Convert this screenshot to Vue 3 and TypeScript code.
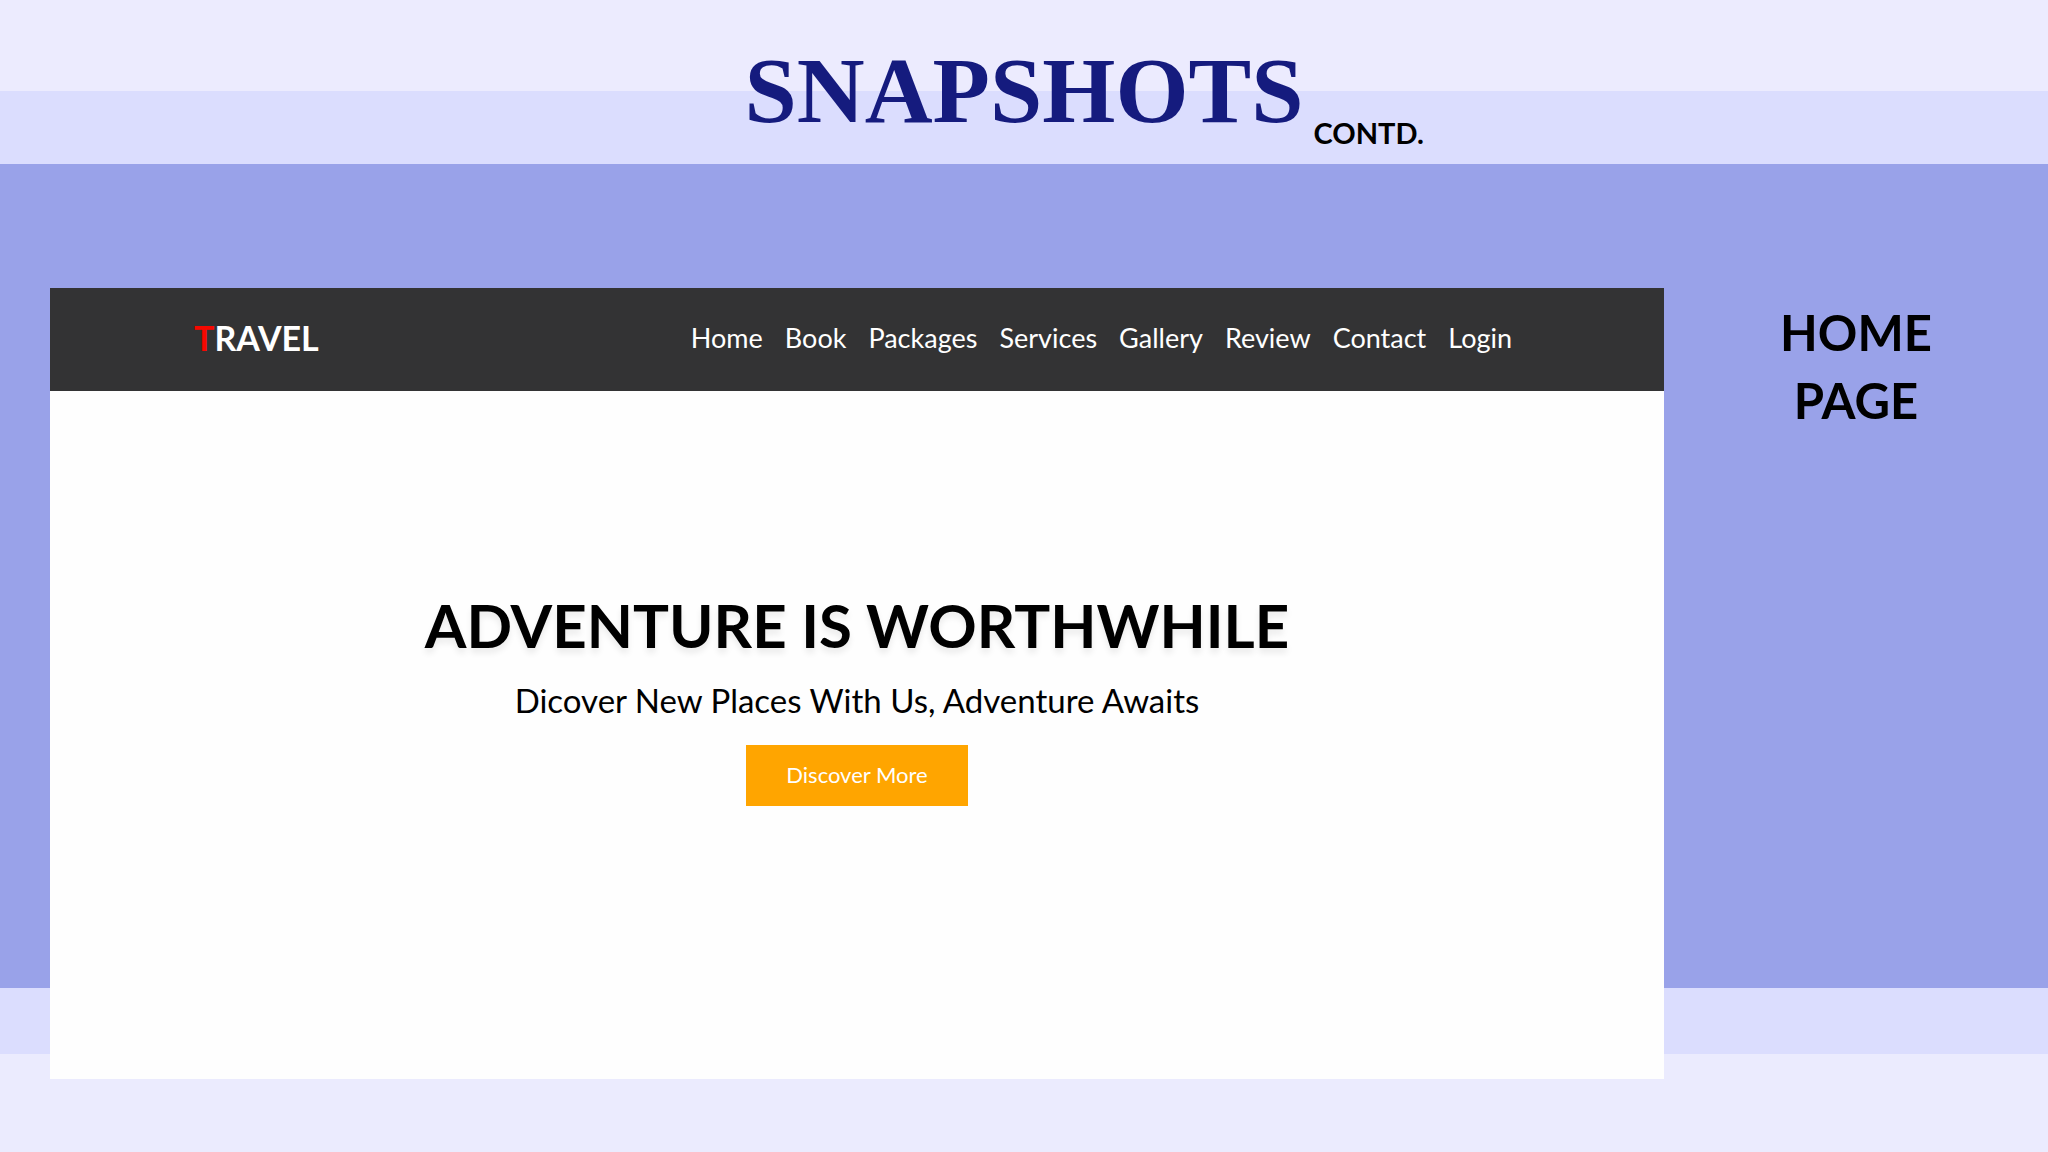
<script setup lang="ts">
const links: string[] = ['Home', 'Book', 'Packages', 'Services', 'Gallery', 'Review', 'Contact', 'Login']
</script>

<template>
  <div class="slide">
    <header class="slide-head">
      <h1 class="title">SNAPSHOTS</h1>
      <span class="contd">CONTD.</span>
    </header>

    <main class="stage">
      <section class="site">
        <div class="site-bar">
          <a class="brand" href="#"><span class="brand-initial">T</span>RAVEL</a>
          <nav class="site-nav">
            <a v-for="link in links" :key="link" href="#">{{ link }}</a>
          </nav>
        </div>
        <div class="hero">
          <h2 class="hero-title">ADVENTURE IS WORTHWHILE</h2>
          <p class="hero-text">Dicover New Places With Us, Adventure Awaits</p>
          <button class="hero-button" type="button">Discover More</button>
        </div>
      </section>
      <h2 class="caption">HOME<br />PAGE</h2>
    </main>
  </div>
</template>

<style>
body {
  margin: 0;
}
</style>

<style scoped>
.slide {
  display: flex;
  flex-direction: column;
  min-height: 100vh;
  font-family: Lato, 'Open Sans', sans-serif;
  color: #000;
  background: linear-gradient(
    to bottom,
    #ecebfe 91px,
    #dbddfe 91px,
    #dbddfe 164px,
    #99a2e9 164px,
    #99a2e9 calc(100% - 164px),
    #dbddfe calc(100% - 164px),
    #dbddfe calc(100% - 98px),
    #ebebfe calc(100% - 98px)
  );
}

.slide-head {
  display: grid;
  grid-template-columns: 1fr auto 1fr;
  column-gap: 10px;
  box-sizing: border-box;
  height: 164px;
  padding: 38px 0 13px;
}

.title {
  grid-column: 2;
  margin: 0;
  font: bold 94px/104px 'Liberation Serif', 'Times New Roman', serif;
  color: #151b7e;
}

.contd {
  align-self: end;
  font-size: 29px;
  font-weight: 700;
  line-height: 36px;
}

.stage {
  flex: 1;
  display: grid;
  grid-template-columns: 1fr 384px;
  padding: 124px 0 73px 50px;
}

.site {
  display: flex;
  flex-direction: column;
  background: #fefefe;
}

.site-bar {
  display: flex;
  align-items: center;
  justify-content: space-between;
  height: 99px;
  padding: 0 152px 4px 144px;
  background: #333334;
}

.site-bar a {
  color: #fff;
  text-decoration: none;
}

.brand {
  font-size: 34px;
  font-weight: 700;
  line-height: 40px;
}

.site-bar .brand-initial {
  color: #f60800;
}

.site-nav {
  display: flex;
  gap: 22px;
  font-size: 27px;
  line-height: 32px;
}

.hero {
  flex: 1;
  display: flex;
  flex-direction: column;
  align-items: center;
  justify-content: center;
  padding-bottom: 76px;
  text-align: center;
}

.hero-title {
  margin: 0;
  font-size: 60px;
  font-weight: 700;
  line-height: 72px;
  text-shadow: 0 5px 6px rgba(0, 0, 0, 0.08);
}

.hero-text {
  margin: 19px 0 25px;
  font-size: 33px;
  line-height: 40px;
}

.hero-button {
  height: 61px;
  padding: 0 40px;
  border: 0;
  font: 22px/28px Lato, 'Open Sans', sans-serif;
  color: #fff;
  background: #ffa500;
}

.caption {
  margin: 10px 0 0;
  font-size: 49px;
  font-weight: 700;
  line-height: 68px;
  text-align: center;
}
</style>
